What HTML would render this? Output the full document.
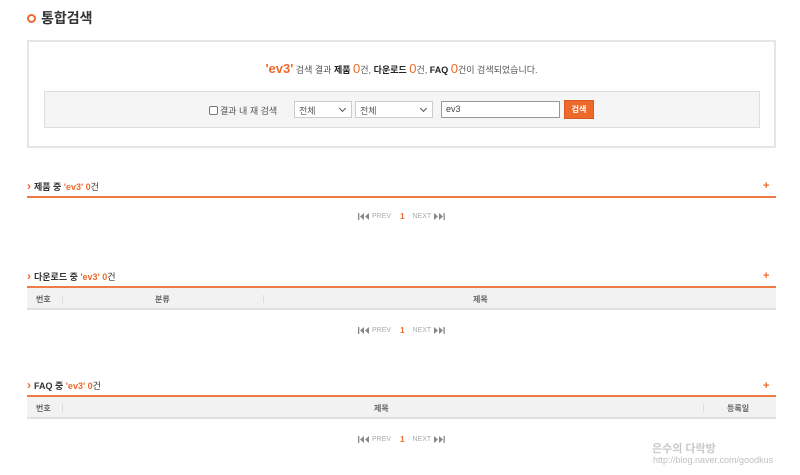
<!DOCTYPE html>
<html><head><meta charset="utf-8"><style>
*{margin:0;padding:0;box-sizing:border-box}
body{width:800px;height:475px;background:#fff;font-family:"Liberation Sans","Noto Sans CJK KR",sans-serif;position:relative;overflow:hidden;color:#333}
.abs{position:absolute}
.title{left:27px;top:8px;font-size:14px;font-weight:bold;color:#333;display:flex;align-items:center}
.title i{display:inline-block;width:9px;height:9px;border:2px solid #ee6a2c;border-radius:50%;margin-right:5px}
.box{left:27px;top:40px;width:749px;height:108px;border:2px solid #e6e6e6}
.sum{left:0;width:100%;top:19px;text-align:center;font-size:9px;color:#555}
.sum b{color:#222}
.o,.sum b.o{color:#ee6a2c}
.big{font-size:13px}
.bar{left:15px;top:49px;width:716px;height:37px;background:#f5f5f5;border:1px solid #ddd}
.sel{position:absolute;top:9px;height:17px;border:1px solid #ccc;background:#fff;font-size:9px;color:#555;padding:2px 4px}
.sel.d:after{content:"";position:absolute;right:6px;top:4px;width:4px;height:4px;border-right:1px solid #555;border-bottom:1px solid #555;transform:rotate(45deg)}
.hd{left:27px;font-size:9px;font-weight:bold;color:#333}
.hd:before{content:"›";color:#ee6a2c;font-size:12px;margin-right:3px;font-weight:bold}
.line{left:27px;width:749px;height:2px;background:#ee7a45}
.plus{left:763px;color:#ee6a2c;font-weight:bold;font-size:11px}
.pg{left:358px;font-size:7px;color:#aaa;display:flex;align-items:center}
.pg b{color:#ee6a2c;font-size:8px;margin:0 8px 0 9px}
.th{left:27px;width:749px;height:22px;background:#f2f2f2;border-bottom:2px solid #e0e0e0;font-size:8px;font-weight:bold;color:#666}
.th span{position:absolute;top:6px}
.sep{position:absolute;top:7px;width:1px;height:8px;background:#ddd}
</style></head><body>
<div class="abs title"><i></i>통합검색</div>
<div class="abs box">
 <div class="abs sum"><b class="o big">'ev3'</b> 검색 결과 <b>제품</b> <span class="o big">0</span>건, <b>다운로드</b> <span class="o big">0</span>건, <b>FAQ</b> <span class="o big">0</span>건이 검색되었습니다.</div>
 <div class="abs bar">
  <div class="abs" style="left:164px;top:12px;font-size:9px;color:#555;display:flex;align-items:center"><span style="display:inline-block;width:9px;height:9px;border:1px solid #777;border-radius:2px;margin-right:2px;background:#fff"></span>결과 내 재 검색</div>
  <div class="sel d" style="left:249px;width:58px">전체</div>
  <div class="sel d" style="left:310px;width:78px">전체</div>
  <div class="sel" style="left:396px;width:119px;border-color:#999;color:#444">ev3</div>
  <div class="abs" style="left:519px;top:8px;width:30px;height:19px;background:#ee6a2c;border:1px solid #d65a20;color:#fff;font-size:8px;font-weight:bold;text-align:center;line-height:17px">검색</div>
 </div>
</div>

<div class="abs hd" style="top:179px">제품 중 <span class="o">'ev3' 0</span><span style="font-weight:normal">건</span></div>
<div class="abs plus" style="top:180px">+</div>
<div class="abs line" style="top:196px"></div>
<div class="abs pg" style="top:212px"><svg width="14" height="7" viewBox="0 0 14 7"><rect x="0" y="0" width="1.3" height="7" fill="#888"/><path d="M6 0L2 3.5 6 7z" fill="#888"/><path d="M11 0L7 3.5 11 7z" fill="#888"/></svg>PREV <b>1</b> NEXT<svg width="14" height="7" viewBox="0 0 14 7"><path d="M3 0L7 3.5 3 7z" fill="#888"/><path d="M8 0L12 3.5 8 7z" fill="#888"/><rect x="12.5" y="0" width="1.3" height="7" fill="#888"/></svg></div>

<div class="abs hd" style="top:269px">다운로드 중 <span class="o">'ev3' 0</span><span style="font-weight:normal">건</span></div>
<div class="abs plus" style="top:270px">+</div>
<div class="abs line" style="top:286px"></div>
<div class="abs th" style="top:288px"><span style="left:9px">번호</span><i class="sep" style="left:35px"></i><span style="left:128px">분류</span><i class="sep" style="left:236px"></i><span style="left:446px">제목</span></div>
<div class="abs pg" style="top:326px"><svg width="14" height="7" viewBox="0 0 14 7"><rect x="0" y="0" width="1.3" height="7" fill="#888"/><path d="M6 0L2 3.5 6 7z" fill="#888"/><path d="M11 0L7 3.5 11 7z" fill="#888"/></svg>PREV <b>1</b> NEXT<svg width="14" height="7" viewBox="0 0 14 7"><path d="M3 0L7 3.5 3 7z" fill="#888"/><path d="M8 0L12 3.5 8 7z" fill="#888"/><rect x="12.5" y="0" width="1.3" height="7" fill="#888"/></svg></div>

<div class="abs hd" style="top:378px">FAQ 중 <span class="o">'ev3' 0</span><span style="font-weight:normal">건</span></div>
<div class="abs plus" style="top:380px">+</div>
<div class="abs line" style="top:395px"></div>
<div class="abs th" style="top:397px"><span style="left:9px">번호</span><i class="sep" style="left:35px"></i><span style="left:347px">제목</span><i class="sep" style="left:676px"></i><span style="left:700px">등록일</span></div>
<div class="abs pg" style="top:435px"><svg width="14" height="7" viewBox="0 0 14 7"><rect x="0" y="0" width="1.3" height="7" fill="#888"/><path d="M6 0L2 3.5 6 7z" fill="#888"/><path d="M11 0L7 3.5 11 7z" fill="#888"/></svg>PREV <b>1</b> NEXT<svg width="14" height="7" viewBox="0 0 14 7"><path d="M3 0L7 3.5 3 7z" fill="#888"/><path d="M8 0L12 3.5 8 7z" fill="#888"/><rect x="12.5" y="0" width="1.3" height="7" fill="#888"/></svg></div>

<div class="abs" style="left:652px;top:440px;font-size:11px;color:#c8c8c8;font-weight:bold">은수의 다락방</div>
<div class="abs" style="left:653px;top:455px;font-size:9px;color:#c0c0c0">http://blog.naver.com/goodkus</div>
</body></html>
